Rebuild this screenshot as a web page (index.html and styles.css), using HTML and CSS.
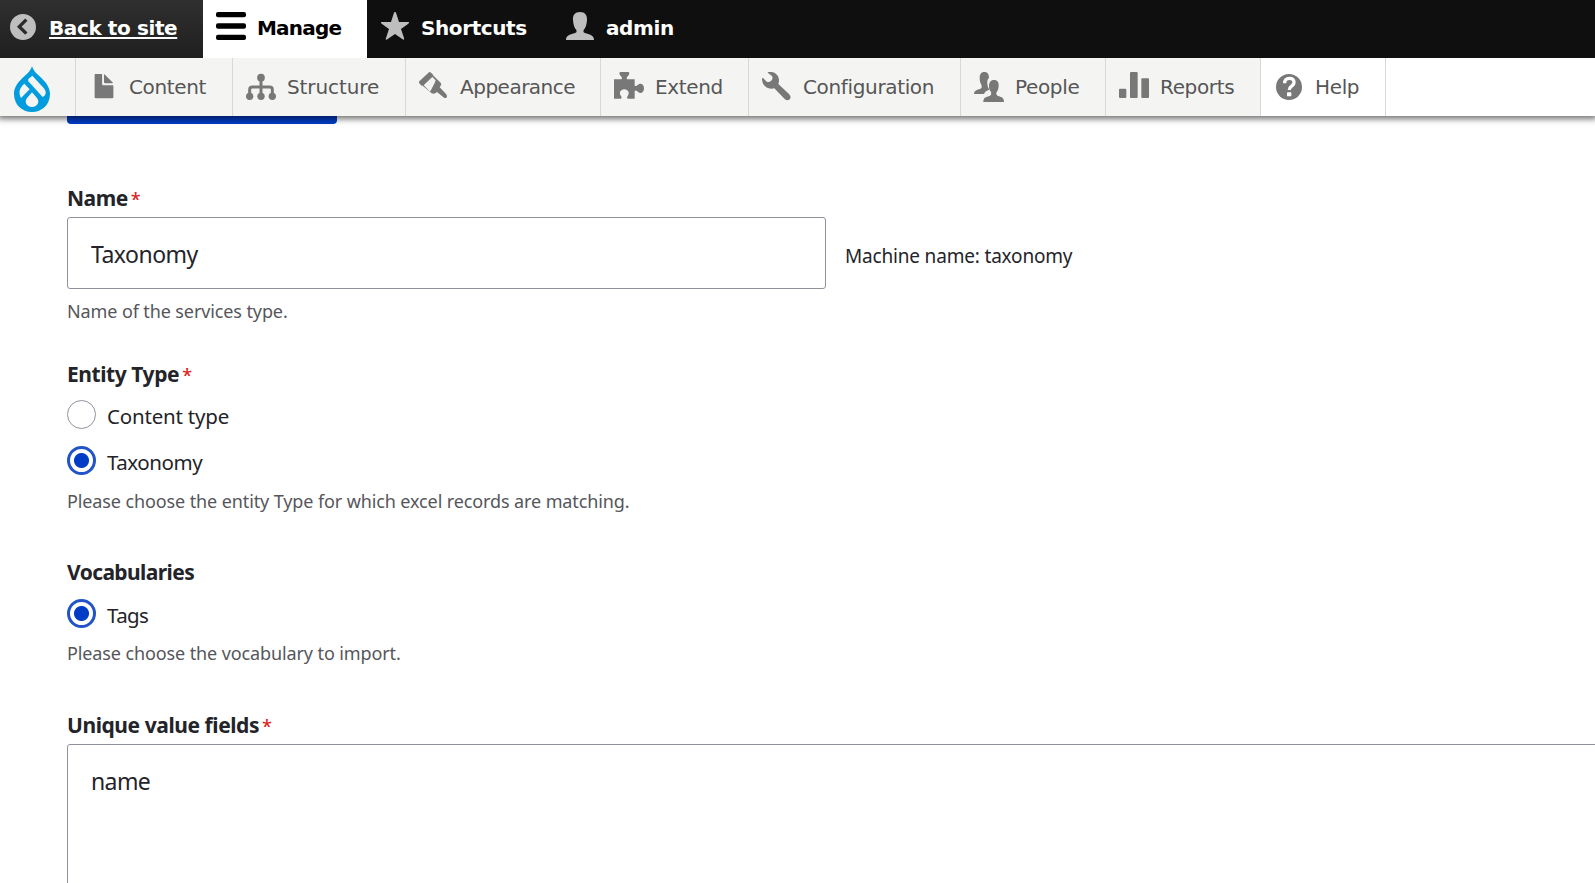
FILE: index.html
```html
<!DOCTYPE html>
<html lang="en">
<head>
  <meta charset="UTF-8" />
  <meta name="viewport" content="width=device-width, initial-scale=1.0"/>
  <title>Edit Taxonomy</title>
  <link rel="stylesheet" href="styles.css">
</head>
<body>

  <nav class="toolbar-bar">
    <a class="bar-item back" href="#">
      <svg class="back-icon" viewBox="0 0 78 78"><circle cx="39" cy="39" r="39" fill="#bebebe"/><path d="M49 17L28 38l21 21" fill="none" stroke="#2b2b2b" stroke-width="10"/></svg>
      <span class="back-text">Back to site</span>
    </a>
    <a class="bar-item manage" href="#">
      <svg class="bar-icon" viewBox="0 0 90 90"><g fill="#000"><rect y="3" width="90" height="16" rx="6"/><rect y="37" width="90" height="16" rx="6"/><rect y="71" width="90" height="16" rx="6"/></g></svg>
      <span class="manage-text">Manage</span>
    </a>
    <a class="bar-item shortcuts" href="#">
      <svg class="bar-icon" viewBox="0 0 90 90"><path fill="#bebebe" d="M45 3c2 0 3 2 4 5l8 25h27c4 0 4 2 1 5L63 54l9 27c1 5 0 7-4 4L45 69 22 85c-4 3-6 1-4-4l9-27L5 38c-3-3-3-5 1-5h27l8-25c1-3 2-5 4-5z"/></svg>
      <span class="shortcuts-text">Shortcuts</span>
    </a>
    <a class="bar-item user" href="#">
      <svg class="bar-icon" viewBox="0 0 90 90"><path fill="#bebebe" d="M45 3c15 0 22 9 21 24-1 15-4 23-10 30-2 6 0 8 6 10 14 5 25 6 25 20H3c0-14 11-15 25-20 6-2 8-4 6-10-6-7-9-15-10-30C23 12 30 3 45 3z"/></svg>
      <span class="user-text">admin</span>
    </a>
  </nav>

  <nav class="toolbar-tray">
    <a class="tray-home" href="#">
      <svg class="logo" viewBox="0 0 108 138">
        <path fill="#009cde" d="M54 0c6 28 54 43 54 84 0 32-24 54-54 54S0 116 0 84C0 43 48 28 54 0z"/>
        <path fill="#f4f4f3" d="M43 39l12-10 34 37c10 12 7 22-3 27L43 46z"/>
        <path fill="#f4f4f3" d="M31 53l16 17-26 26c-9-17-4-31 10-43z"/>
        <path fill="#f4f4f3" d="M54 79l15 17c9 11 2 27-15 27S30 107 39 96z"/>
      </svg>
    </a>
    <a class="tray-item content" href="#">
      <svg class="tray-icon" viewBox="0 0 16 16"><path d="M12.502 7h-5c-.276 0-.502-.225-.502-.5v-5c0-.275-.225-.5-.5-.5h-3c-.275 0-.5.225-.5.5v12.029c0 .275.225.5.5.5h9.002c.275 0 .5-.225.5-.5v-6.029c0-.275-.225-.5-.5-.5z"/><path d="M8.502 6h4c.275 0 .34-.159.146-.354l-4.293-4.292c-.195-.195-.353-.129-.353.146v4c0 .275.225.5.5.5z"/></svg>
      <span>Content</span>
    </a>
    <a class="tray-item structure" href="#">
      <svg class="tray-icon" viewBox="0 0 90 90"><circle cx="45" cy="17" r="11.500"/><circle cx="11" cy="73" r="11"/><circle cx="45" cy="73" r="11"/><circle cx="79" cy="73" r="11"/><path d="M45 17v56M11 73V53q0-8 8-8h52q8 0 8 8v20" fill="none" stroke="#787878" stroke-width="9"/></svg>
      <span>Structure</span>
    </a>
    <a class="tray-item appearance" href="#">
      <svg class="tray-icon" viewBox="0 0 90 90"><path d="M1 28L30 1q3-2 6 1l7 7-34 33-7-7q-4-4-1-7z"/><path d="M9 40L41 9l24 23q4 4 0 9l-3 5 20 21q6 13-6 11L54 60q-7 7-16 4z"/><path d="M14 40l26-25 10 10q-3 10-8 18l-9 16z" fill="#f4f4f3"/></svg>
      <span>Appearance</span>
    </a>
    <a class="tray-item extend" href="#">
      <svg class="tray-icon" viewBox="0 0 90 90"><path d="M0 22h23q3-5-2-9c-5-4-6-13-2-13h24c5 0 3 9-2 13q-5 4-2 9h23v19q4 3 8-1c7-9 20-6 20 9s-13 18-20 9q-4-4-8-1v23H41q-4-4 0-8c7-8 2-20-10-20s-17 12-10 20q4 4 0 8H0z"/></svg>
      <span>Extend</span>
    </a>
    <a class="tray-item configuration" href="#">
      <svg class="tray-icon" viewBox="0 0 90 90"><path d="M18 1C35-4 51 8 51 25q0 6-2 11l32 30c12 13-2 25-13 15L37 49C19 54 0 42 0 20q0-4 4-1l10 10q4 2 9 0 7-3 8-8 2-6-2-10l-10-7q-3-2-1-3z"/></svg>
      <span>Configuration</span>
    </a>
    <a class="tray-item people" href="#">
      <svg class="tray-icon" viewBox="0 0 90 90"><path d="M31 0c11 0 14 8 14 18q-6 4-5 17 1 12 6 18-12 3-16 13H0c0-8 5-11 15-14 8-2 10-7 7-14-3-5-5-10-5-19C17 8 20 0 31 0z"/><path d="M60 24c11 0 15 8 14 18-1 9-2 13-6 18-3 6 0 11 7 13 10 3 15 6 15 17H28c0-11 5-14 16-17 7-2 9-7 7-13-4-5-6-9-6-18 0-10 4-18 15-18z"/></svg>
      <span>People</span>
    </a>
    <a class="tray-item reports" href="#">
      <svg class="tray-icon" viewBox="0 0 90 90"><rect y="50" width="22" height="28" rx="3"/><rect x="33" width="23" height="78" rx="3"/><rect x="67" y="19" width="23" height="59" rx="3"/></svg>
      <span>Reports</span>
    </a>
    <a class="tray-item help" href="#">
      <svg class="tray-icon" viewBox="0 0 90 90"><circle cx="45" cy="45" r="39"/><path d="M32 34q0-15 14-15t14 12q0 7-8 12-6 4-6 11" fill="none" stroke="#fff" stroke-width="10"/><rect x="39" y="61" width="13" height="12" rx="2" fill="#fff"/></svg>
      <span>Help</span>
    </a>
  </nav>

  <main class="page">
    <div class="action-button"></div>

    <form>
      <div class="form-item">
        <label class="form-label name-label" for="name">Name<span class="required">*</span></label>
        <div class="name-row">
          <input class="form-text" type="text" id="name" value="Taxonomy">
          <span class="machine-name">Machine name: taxonomy</span>
        </div>
        <div class="description name-description">Name of the services type.</div>
      </div>

      <div class="form-item">
        <div class="form-label entity-label">Entity Type<span class="required">*</span></div>
        <label class="option"><input class="form-radio" type="radio" name="entity"><span class="content-text">Content type</span></label>
        <label class="option"><input class="form-radio" type="radio" name="entity" checked><span class="taxonomy-text">Taxonomy</span></label>
        <div class="description entity-description">Please choose the entity Type for which excel records are matching.</div>
      </div>

      <div class="form-item">
        <div class="form-label vocabularies-label">Vocabularies</div>
        <label class="option"><input class="form-radio" type="radio" name="vocabulary" checked><span class="tags-text">Tags</span></label>
        <div class="description vocabulary-description">Please choose the vocabulary to import.</div>
      </div>

      <div class="form-item">
        <label class="form-label unique-label" for="fields">Unique value fields<span class="required">*</span></label>
        <textarea class="form-textarea" id="fields">name</textarea>
      </div>
    </form>
  </main>

</body>
</html>
```

FILE: styles.css
```css
* {
  box-sizing: border-box;
}
body {
  font-family: 'Noto Sans', sans-serif;
  margin: 0;
  height: 883px;
  overflow: hidden;
  background-color: #fff;
  color: #232429;
}
a {
  color: inherit;
  text-decoration: none;
}
svg {
  display: block;
  flex: none;
}

/* Top bar */
.toolbar-bar {
  display: flex;
  height: 58px;
  background-color: #0f0f0f;
  color: #fff;
  font: bold 20px/24px 'DejaVu Sans', sans-serif;
}
.bar-item {
  display: flex;
  align-items: center;
  padding-bottom: 6px;
  white-space: nowrap;
}
.bar-item span {
  padding-top: 3px;
}
.bar-icon {
  width: 30px;
  height: 30px;
}
.back {
  width: 203px;
  padding-left: 10px;
  gap: 13px;
  background-image: linear-gradient(#2f2f2f, #1f1f1f);
}
.back-icon {
  width: 26px;
  height: 26px;
  margin-top: 2px;
}
.back-text {
  text-decoration: underline;
  text-decoration-thickness: 2px;
  text-underline-offset: 2px;
  letter-spacing: -0.4px;
}
.manage {
  width: 164px;
  padding-left: 13px;
  gap: 11px;
  background-color: #fff;
  color: #000;
}
.manage-text {
  letter-spacing: -0.8px;
}
.shortcuts {
  width: 185px;
  padding-left: 13px;
  gap: 11px;
}
.shortcuts-text {
  letter-spacing: -0.4px;
}
.user {
  padding-left: 13px;
  gap: 11px;
}
.user-text {
  letter-spacing: -0.4px;
}

/* Admin menu */
.toolbar-tray {
  position: relative;
  display: flex;
  height: 58px;
  background-color: #fff;
  box-shadow: 0 1px 6px 2px rgba(0, 0, 0, 0.55);
  clip-path: inset(0 0 -12px 0);
  color: #565656;
  font: 20px/24px 'DejaVu Sans', sans-serif;
  letter-spacing: -0.35px;
}
.tray-home {
  width: 76px;
  padding: 8px 0 0 14px;
  background-color: #f4f4f3;
  border-right: 1px solid #d8d8d8;
}
.logo {
  width: 36px;
  height: 46px;
}
.tray-item {
  display: flex;
  align-items: center;
  gap: 11px;
  padding-left: 13px;
  background-color: #f4f4f3;
  border-right: 1px solid #d8d8d8;
  white-space: nowrap;
}
.tray-icon {
  width: 30px;
  height: 30px;
  fill: #787878;
}
.content {
  width: 157px;
  gap: 10px;
}
.structure {
  width: 173px;
  letter-spacing: -0.1px;
}
.appearance {
  width: 195px;
  letter-spacing: -0.5px;
}
.extend {
  width: 148px;
}
.configuration {
  width: 212px;
}
.people {
  width: 145px;
}
.reports {
  width: 155px;
}
.help {
  width: 125px;
  background-color: #fff;
}

/* Form */
.page {
  padding-left: 67px;
}
.action-button {
  width: 270px;
  height: 8px;
  background-color: #003cc5;
  border-radius: 0 0 4px 4px;
}
.form-label {
  display: block;
  font-size: 21px;
  font-weight: bold;
  line-height: 30px;
  letter-spacing: -0.43px;
}
.required {
  margin-left: 3px;
  color: #dc2323;
  font-size: 18px;
  font-weight: 500;
  line-height: 1;
}
.name-label {
  padding-top: 59px;
  letter-spacing: -0.5px;
}
.name-row {
  display: flex;
  align-items: center;
  gap: 19px;
  margin-top: 4px;
}
.form-text {
  width: 759px;
  height: 72px;
  padding: 2px 23px 0;
  border: 1px solid #8e929c;
  border-radius: 3px;
  color: #232429;
  font: 23px 'Noto Sans', sans-serif;
  letter-spacing: -0.5px;
}
.machine-name {
  padding-top: 6px;
  font-size: 19px;
  letter-spacing: -0.18px;
}
.description {
  color: #55565b;
  font-size: 18px;
  line-height: 24px;
  letter-spacing: -0.11px;
}
.name-description {
  margin-top: 10px;
}
.entity-label {
  padding: 36px 0 2px;
}
.option {
  display: flex;
  align-items: center;
  height: 46px;
  font-size: 20.5px;
  line-height: 28px;
}
.option span {
  margin-left: 11px;
  padding-top: 4px;
}
.content-text {
  letter-spacing: -0.2px;
}
.taxonomy-text {
  letter-spacing: -0.45px;
}
.tags-text {
  letter-spacing: -0.6px;
}
.form-radio {
  appearance: none;
  width: 29px;
  height: 29px;
  margin: 0;
  border: 1px solid #8e929c;
  border-radius: 50%;
}
.form-radio:checked {
  border: 3px solid #2253c8;
  background: radial-gradient(circle, #003cc5 7px, #fff 8px);
}
.entity-description {
  margin-top: 6px;
}
.vocabularies-label {
  padding: 44px 0 3px;
  letter-spacing: -0.6px;
}
.vocabulary-description {
  margin-top: 5px;
}
.unique-label {
  padding-top: 45px;
}
.form-textarea {
  display: block;
  width: 1600px;
  height: 240px;
  margin-top: 4px;
  padding: 19px 23px;
  border: 1px solid #8e929c;
  border-radius: 3px;
  color: #232429;
  font: 23px/34px 'Noto Sans', sans-serif;
  letter-spacing: -0.6px;
  resize: none;
}
```
